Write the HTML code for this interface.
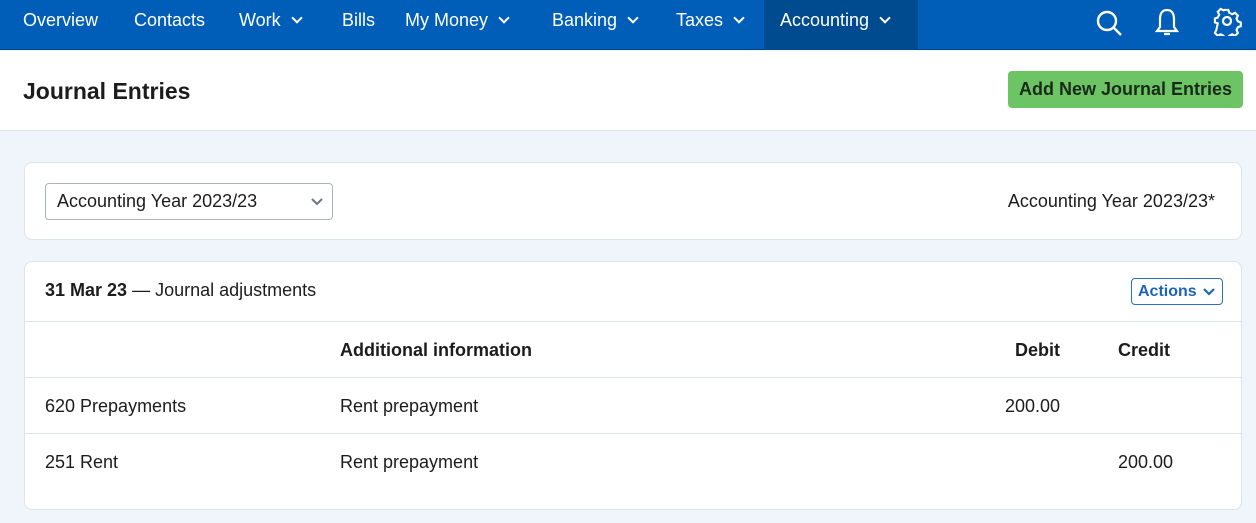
<!DOCTYPE html>
<html><head><style>
*{box-sizing:border-box;margin:0;padding:0}
body{width:1256px;height:523px;overflow:hidden;background:#f0f5fc;font-family:"Liberation Sans",sans-serif;color:#1c1c1c;position:relative}
.nav{position:absolute;left:0;top:0;width:1256px;height:50px;background:#005eb8;border-bottom:1px solid #00458a}
.nav span{position:absolute;top:10px;color:#fff;font-size:18px;white-space:nowrap}
.chev{display:inline-block;width:8px;height:8px;border-right:2px solid #fff;border-bottom:2px solid #fff;transform:rotate(45deg);margin-left:12px;position:relative;top:-4px}
.act{position:absolute;left:764px;top:0;width:154px;height:50px;background:#004a8f}
.hdr{position:absolute;left:0;top:51px;width:1256px;height:80px;background:#fff;border-bottom:1px solid #dde3ea}
.hdr h1{position:absolute;left:23px;top:27px;font-size:23px;font-weight:bold}
.btn{position:absolute;left:1008px;top:20px;width:235px;height:37px;background:#6cc464;border-radius:4px;font-size:18px;font-weight:bold;color:#1a2a1a;text-align:center;line-height:37px}
.card{position:absolute;left:24px;width:1218px;background:#fff;border:1px solid #dde3ea;border-radius:8px}
.sel{position:absolute;left:20px;top:20px;width:288px;height:37px;border:1px solid #aab2ba;border-radius:4px;font-size:18px;padding:7px 0 0 11px}
.t{position:absolute;font-size:18px;white-space:nowrap}
.line{position:absolute;left:0;width:1216px;height:1px;background:#dde3ea}
.actions{position:absolute;left:1106px;top:16px;width:92px;height:27px;border:1px solid #2d6fc0;border-radius:4px;color:#1d64b8;font-size:16px;font-weight:bold;padding:4px 0 0 6px}
</style></head><body>
<div class="nav">
<div class="act"></div>
<span style="left:23px">Overview</span>
<span style="left:134px">Contacts</span>
<span style="left:239px">Work<i class="chev"></i></span>
<span style="left:342px">Bills</span>
<span style="left:405px">My Money<i class="chev"></i></span>
<span style="left:552px">Banking<i class="chev"></i></span>
<span style="left:676px">Taxes<i class="chev"></i></span>
<span style="left:780px">Accounting<i class="chev"></i></span>
<svg style="position:absolute;left:1094px;top:8px" width="30" height="30" viewBox="0 0 30 30" fill="none" stroke="#fff" stroke-width="2.4"><circle cx="13" cy="13" r="9"/><path d="M20 20l7 7"/></svg>
<svg style="position:absolute;left:1153px;top:6px" width="28" height="32" viewBox="0 0 28 32" fill="none" stroke="#fff" stroke-width="2.2"><path d="M14 4c-5 0-7 4-7 9v8l-3 4h20l-3-4v-8c0-5-2-9-7-9zM11 28h6"/></svg>
<svg style="position:absolute;left:1212px;top:6px" width="30" height="30" viewBox="0 0 30 30" fill="none" stroke="#fff" stroke-width="2.2"><circle cx="15" cy="15" r="4"/><path d="M13 3h4l1 3 3 1.5 3-1.5 3 3-1.5 3 1.5 3 3 1v4l-3 1-1.5 3 1.5 3-3 3-3-1.5-3 1.5-1 3h-4l-1-3-3-1.5-3 1.5-3-3 1.5-3L6 17l-3-1v-4l3-1 1.5-3L6 5l3-3 3 1.5z" transform="translate(0 1) scale(0.96)"/></svg>
</div>
<div class="hdr"><h1>Journal Entries</h1><div class="btn">Add New Journal Entries</div></div>
<div class="card" style="top:162px;height:78px">
<div class="sel">Accounting Year 2023/23<svg style="position:absolute;right:9px;top:14px" width="12" height="8" viewBox="0 0 12 8" fill="none" stroke="#6b7580" stroke-width="2"><path d="M1 1l5 5 5-5"/></svg></div>
<div class="t" style="right:26px;top:28px">Accounting Year 2023/23*</div>
</div>
<div class="card" style="top:261px;height:249px">
<div class="t" style="left:20px;top:18px"><b>31 Mar 23</b> — Journal adjustments</div>
<div class="actions">Actions<svg style="position:absolute;right:7px;top:9px" width="12" height="8" viewBox="0 0 12 8" fill="none" stroke="#1d64b8" stroke-width="2.2"><path d="M1 1l5 5 5-5"/></svg></div>
<div class="line" style="top:59px"></div>
<div class="t" style="left:315px;top:78px;font-weight:bold">Additional information</div>
<div class="t" style="right:181px;top:78px;font-weight:bold">Debit</div>
<div class="t" style="left:1093px;top:78px;font-weight:bold">Credit</div>
<div class="line" style="top:115px"></div>
<div class="t" style="left:20px;top:134px">620 Prepayments</div>
<div class="t" style="left:315px;top:134px">Rent prepayment</div>
<div class="t" style="right:181px;top:134px">200.00</div>
<div class="line" style="top:171px"></div>
<div class="t" style="left:20px;top:190px">251 Rent</div>
<div class="t" style="left:315px;top:190px">Rent prepayment</div>
<div class="t" style="left:1093px;top:190px">200.00</div>
</div>
</body></html>
